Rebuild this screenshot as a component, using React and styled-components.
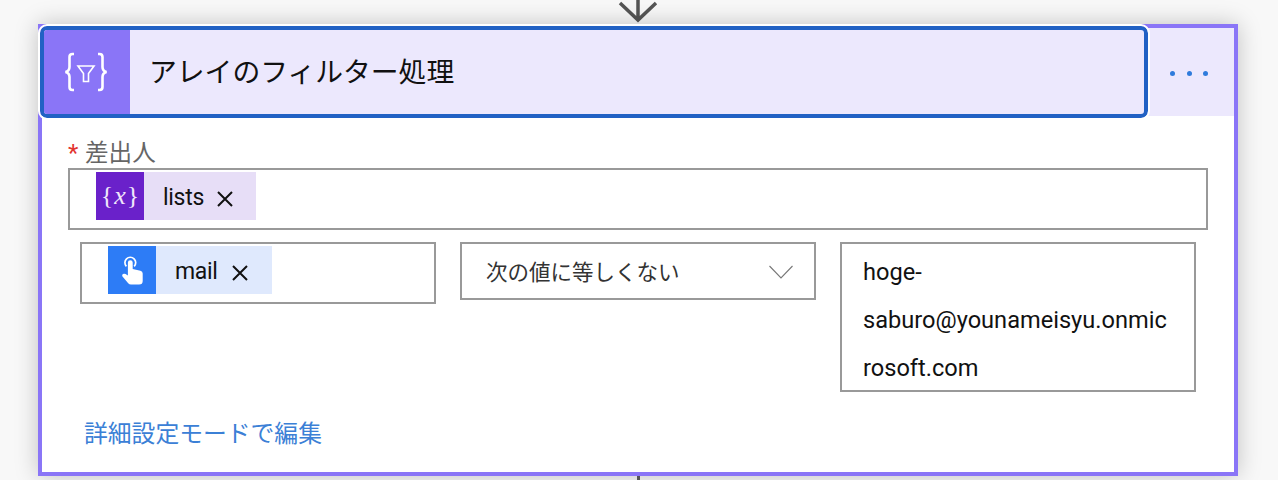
import styled, { createGlobalStyle } from 'styled-components';

const GlobalStyle = createGlobalStyle`
  html, body {
    margin: 0;
    height: 480px;
    overflow: hidden;
    background: #f8f8f8;
  }
  * {
    box-sizing: border-box;
  }
`;

const FONT = `Roboto, "Noto Sans CJK JP", sans-serif`;

const Page = styled.div`
  height: 480px;
  overflow: hidden;
  padding-right: 2px;
  display: flex;
  flex-direction: column;
  align-items: center;
  font-family: ${FONT};
`;

const ArrowSlot = styled.div`
  height: 24px;
  display: flex;
  align-items: flex-end;
  justify-content: center;
  flex-shrink: 0;
`;

const Card = styled.section`
  width: 1200px;
  height: 452px;
  flex-shrink: 0;
  border: 4px solid #8a75f7;
  background: #fff;
  box-shadow: 0 0 22px rgba(0, 0, 0, 0.22);
`;

const Connector = styled.div`
  width: 3px;
  height: 10px;
  flex-shrink: 0;
  background: #555;
`;

const Header = styled.header`
  height: 88px;
  display: flex;
  background: #ece8fd;
`;

const TitleBox = styled.div`
  width: 1108px;
  height: 92px;
  margin: -2px 0 0 -2px;
  display: flex;
  flex-shrink: 0;
  overflow: hidden;
  border: 4px solid #2161c4;
  border-radius: 7px;
  outline: 2px solid #fff;
  position: relative;
  background: #ece8fd;
`;

const TitleIcon = styled.div`
  width: 86px;
  padding-right: 2px;
  display: flex;
  align-items: center;
  justify-content: center;
  background: #8a75f7;
`;

const Title = styled.h1`
  margin: 2px 0 0 19px;
  align-self: center;
  font-size: 27.8px;
  line-height: 36px;
  font-weight: 400;
  color: #111;
`;

const MenuButton = styled.div`
  flex: 1;
  display: flex;
  align-items: center;
  justify-content: center;
  gap: 11.5px;
  padding-right: 4px;
  padding-top: 2px;
`;

const Dot = styled.span`
  width: 5px;
  height: 5px;
  border-radius: 50%;
  background: #2f7bdc;
`;

const Body = styled.div`
  padding: 22px 26px 0;
`;

const Label = styled.div`
  height: 30px;
  display: flex;
  align-items: center;
  font-size: 23.6px;
  line-height: 30px;
  color: #666;
`;

const Required = styled.span`
  width: 17px;
  color: #e2332f;
  font-size: 24px;
`;

const Field = styled.div`
  width: 1140px;
  height: 62px;
  padding: 2px 26px;
  border: 2px solid #999;
  display: flex;
`;

const ConditionRow = styled.div`
  margin: 12px 0 0 12px;
  display: grid;
  grid-template-columns: repeat(3, 356px);
  gap: 24px;
  align-items: start;
`;

const TokenBox = styled.div`
  height: 62px;
  padding: 2px 26px;
  border: 2px solid #999;
  display: flex;
`;

const Token = styled.div`
  width: ${(p) => p.$width}px;
  height: 48px;
  display: flex;
  align-items: center;
  background: ${(p) => p.$bg};
  font-size: 23px;
  letter-spacing: -0.3px;
  color: #111;
`;

const TokenIcon = styled.div`
  width: 48px;
  height: 48px;
  display: flex;
  align-items: center;
  justify-content: center;
  background: ${(p) => p.$bg};
  color: #fff;
`;

const VarGlyph = styled.span`
  font-family: "Liberation Serif", serif;
  font-size: 26px;
  letter-spacing: 0;
  line-height: 1;
  color: #f0e6fb;

  i {
    margin: 0 1px;
  }
`;

const TokenName = styled.span`
  margin: 3px 0 0 19px;
  line-height: 45px;
`;

const RemoveIcon = styled.svg`
  width: 16px;
  height: 16px;
  margin: 6px 0 0 ${(p) => p.$gap}px;
`;

const SelectBox = styled.div`
  height: 58px;
  padding: 0 21px 2px 24px;
  border: 2px solid #999;
  display: flex;
  align-items: center;
  justify-content: space-between;
  font-size: 21.5px;
  color: #333;

  svg {
    margin-top: 3px;
  }
`;

const ValueBox = styled.div`
  height: 150px;
  padding: 4px 21px 0;
  border: 2px solid #999;
  font-size: 23.6px;
  line-height: 48px;
  color: #111;
  overflow-wrap: anywhere;
`;

const AdvancedLink = styled.a`
  display: block;
  margin: 26px 0 0 16px;
  font-size: 23.8px;
  line-height: 32px;
  color: #3b80d6;
`;

function FilterIcon() {
  return (
    <svg width="44" height="40" viewBox="0 0 44 40" fill="none" stroke="#fff">
      <path
        d="M10 2 H8.5 Q5.5 2 5.5 5 V15 Q5.5 19 1.5 20 Q5.5 21 5.5 25 V35 Q5.5 38 8.5 38 H10"
        strokeWidth="2.6"
      />
      <path
        d="M34 2 H35.5 Q38.5 2 38.5 5 V15 Q38.5 19 42.5 20 Q38.5 21 38.5 25 V35 Q38.5 38 35.5 38 H34"
        strokeWidth="2.6"
      />
      <path d="M14 14 H30 L24.5 21.5 V29.5 H19.5 V21.5 Z" strokeWidth="1.6" />
    </svg>
  );
}

function TouchIcon() {
  return (
    <svg width="21" height="29" viewBox="0 0 21 29">
      <path d="M4.4 10.4 A5.4 5.4 0 1 1 12.2 10.4" fill="none" stroke="#fff" strokeWidth="1.7" />
      <path
        d="M5.9 6.6 a2.4 2.4 0 0 1 4.8 0 V13 L18.4 14.8 q2.3 .6 2.3 2.8 V25 q0 3.6 -3.6 3.6 H9 q-1.7 0 -2.8 -1.4 L.7 20.8 q-1.1 -1.6 .2 -2.7 q1.3 -.9 2.7 0 L5.9 19.6 Z"
        fill="#fff"
      />
    </svg>
  );
}

function Remove({ gap }) {
  return (
    <RemoveIcon $gap={gap} viewBox="0 0 16 16" fill="none" stroke="#111" strokeWidth="2">
      <path d="M1 1 L15 15 M15 1 L1 15" />
    </RemoveIcon>
  );
}

function App() {
  return (
    <>
      <GlobalStyle />
      <Page>
        <ArrowSlot>
          <svg width="42" height="24" viewBox="0 0 42 24" fill="none" stroke="#555" strokeWidth="3.5">
            <path d="M21 0 V20 M3 3 L21 20 L39 3" />
          </svg>
        </ArrowSlot>
        <Card>
          <Header>
            <TitleBox>
              <TitleIcon>
                <FilterIcon />
              </TitleIcon>
              <Title>アレイのフィルター処理</Title>
            </TitleBox>
            <MenuButton>
              <Dot />
              <Dot />
              <Dot />
            </MenuButton>
          </Header>
          <Body>
            <Label>
              <Required>*</Required>差出人
            </Label>
            <Field>
              <Token $bg="#e7def7" $width={160}>
                <TokenIcon $bg="#6a21ca">
                  <VarGlyph>
                    {'{'}
                    <i>x</i>
                    {'}'}
                  </VarGlyph>
                </TokenIcon>
                <TokenName>lists</TokenName>
                <Remove gap={13} />
              </Token>
            </Field>
            <ConditionRow>
              <TokenBox>
                <Token $bg="#dfe9fd" $width={164}>
                  <TokenIcon $bg="#2d7cf6">
                    <TouchIcon />
                  </TokenIcon>
                  <TokenName>mail</TokenName>
                  <Remove gap={14} />
                </Token>
              </TokenBox>
              <SelectBox>
                次の値に等しくない
                <svg width="24" height="14" viewBox="0 0 24 14" fill="none" stroke="#777" strokeWidth="1.1">
                  <path d="M0.5 1 L12 13 L23.5 1" />
                </svg>
              </SelectBox>
              <ValueBox>hoge-saburo@younameisyu.onmicrosoft.com</ValueBox>
            </ConditionRow>
            <AdvancedLink>詳細設定モードで編集</AdvancedLink>
          </Body>
        </Card>
        <Connector />
      </Page>
    </>
  );
}

export default App;
